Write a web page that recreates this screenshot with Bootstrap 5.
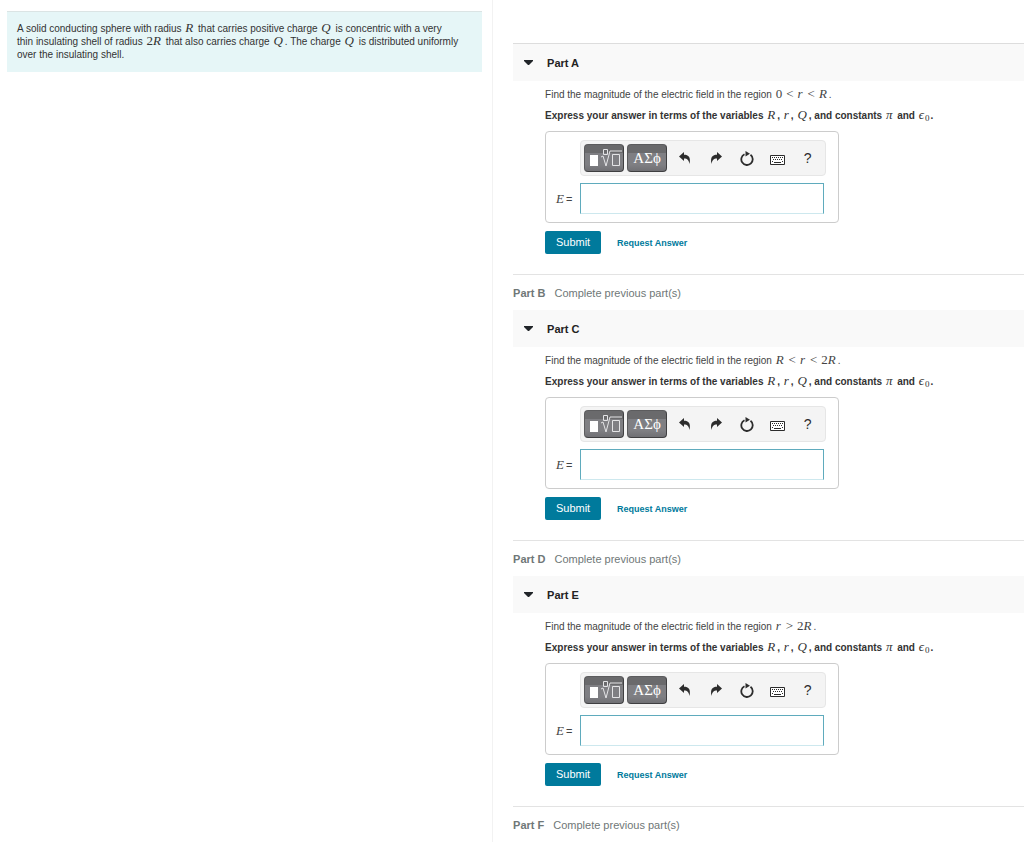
<!DOCTYPE html>
<html lang="en">
<head>
<meta charset="utf-8">
<meta name="viewport" content="width=device-width, initial-scale=1">
<title>Electric field of a sphere and shell</title>
<link href="https://cdn.jsdelivr.net/npm/bootstrap@5.3.0/dist/css/bootstrap.min.css" rel="stylesheet">
<style>
body{font-family:"Liberation Sans",Arial,sans-serif;font-size:11px;line-height:16px;color:#444;background:#fff}
.split{display:grid;grid-template-columns:37fr 40fr}
.intro{margin:11px 10px 0 7px;padding:10px 10px 11px;background:#e6f6f7;border-top:1px solid #dbe4e4;font-size:10px;line-height:13px;color:#333}
.parts{border-left:1px solid #f2f2f2;padding:43px 0 0 20px}
.m{display:inline-block;font-family:"Liberation Serif","Times New Roman",serif;font-size:13px;font-weight:400;line-height:12px;white-space:nowrap;padding:0 1px}
.m i{padding-right:1px}
.rel{padding:0 4px}
.m sub{font-size:9px;bottom:-2px}
.part-head{height:37px;background:#f9f9f9;color:#222;padding-left:11px}
.part-head.first{border-top:1px solid #ddd;height:38px}
.part-head h2{font-size:11px;font-weight:700;line-height:16px}
.part-head button{width:9px;height:16px;margin-right:14px;line-height:0}
.part-body{padding:6px 0 20px 32px}
.part-body p{font-size:10px}
.hint{margin-top:5px;color:#333}
.answer{width:294px;max-width:100%;margin-top:7px;border:1px solid #ccc;border-radius:4px;padding:8px 12px 8px 9px}
.tools{margin-left:25px;width:246px;height:36px;background:#f4f4f4;border:1px solid #e6e6e6;border-radius:4px;padding:0 2px 0 3px}
.tools button{flex:1;height:28px;color:#2c2c2c;line-height:0}
.tools .key{flex:none;width:40px;height:28px;margin-right:3px;border:1px solid #5c5c5e;border-right-color:#3f3f41;border-bottom-color:#3f3f41;border-radius:4px;background:linear-gradient(#6a6a6c 0 30%,#7f7f83 30% 75%,#707074);color:#fff;font:15px/24px "Liberation Serif",serif}
.tools .help{font-size:14px}
.field{margin-top:7px}
.field label{width:25px}
.field input{width:244px;height:31px;border:1px solid #5fabbd;border-bottom-color:#cde8ee;padding:0 6px;border-radius:0;font-size:13px}
.submit{width:56px;height:23px;background:#007a9c;color:#fff;border-radius:2px;font-size:11px;line-height:23px}
.request{font-size:9px;color:#007a9c;margin-left:16px}
.locked{border-top:1px solid #e3e3e3;padding:10px 0 9px;color:#6f7777}
.locked b{margin-right:9px}
</style>
</head>
<body>
<svg class="d-none" xmlns="http://www.w3.org/2000/svg">
<symbol id="caret" viewBox="0 0 9 5"><path d="M0 0h9v1L5 5H4L0 1z" fill="currentColor"/></symbol>
<symbol id="root" viewBox="0 0 38 26"><path d="M5 9h8v11H5z" fill="#fff"/><path d="M18.500 3.500h4v5h-4zM16 11l2-1 3 10 4-15h12M27.500 8.500h7v11h-7z" fill="none" stroke="#e4e4e6"/></symbol>
<symbol id="undo" viewBox="0 0 12 12"><path d="M0 4.500 5 0v2.700c4.500 0 7 2.500 5.500 9.300C10 8.500 8.500 6.500 5 6.500V9z" fill="currentColor"/></symbol>
<symbol id="redo" viewBox="0 0 12 12"><path d="M12 4.500 7 0v2.700C2.500 2.700 0 5.200 1.500 12 2 8.500 3.500 6.500 7 6.500V9z" fill="currentColor"/></symbol>
<symbol id="reset" viewBox="0 0 14 15"><path d="M4.500 3.200A5.700 5.700 0 1 0 10.500 3.800" fill="none" stroke="currentColor" stroke-width="1.800"/><path d="M5.500 0l4.500 2.800L5.500 5.500z" fill="currentColor"/></symbol>
<symbol id="keys" viewBox="0 0 15 10"><path d="M.5.5h14v9H.5z" fill="#fff" stroke="currentColor"/><path d="M2 2.500h11M3 4.500h10M2 6.500h1M12 6.500h1" fill="none" stroke="currentColor" stroke-dasharray="1 1"/><path d="M4 7.500h7" stroke="currentColor"/></symbol>
</svg>

<div class="split min-vh-100">
<aside>
<div class="intro">A solid conducting sphere with radius <span class="m"><i>R</i></span> that carries positive charge <span class="m"><i>Q</i></span> is concentric with a very<br>thin insulating shell of radius <span class="m">2<i>R</i></span> that also carries charge <span class="m"><i>Q</i></span>. The charge <span class="m"><i>Q</i></span> is distributed uniformly<br>over the insulating shell.</div>
</aside>

<main class="parts">
<section>
<div class="part-head first d-flex align-items-center"><button class="btn border-0 p-0" type="button" aria-label="Collapse Part A"><svg width="9" height="5"><use href="#caret"/></svg></button><h2 class="m-0">Part A</h2></div>
<div class="part-body">
<p class="m-0">Find the magnitude of the electric field in the region <span class="m">0<span class="rel">&lt;</span><i>r</i><span class="rel">&lt;</span><i>R</i></span>.</p>
<p class="hint fw-bold mb-0">Express your answer in terms of the variables <span class="m"><i>R</i></span>, <span class="m"><i>r</i></span>, <span class="m"><i>Q</i></span>, and constants <span class="m"><i>π</i></span> and <span class="m"><i>ϵ</i><sub>0</sub></span>.</p>
<div class="answer">
<div class="tools d-flex align-items-center">
<button class="btn key p-0" type="button" aria-label="Templates"><svg width="38" height="26"><use href="#root"/></svg></button>
<button class="btn key p-0" type="button">ΑΣϕ</button>
<button class="btn border-0 p-0" type="button" aria-label="Undo"><svg width="12" height="12"><use href="#undo"/></svg></button>
<button class="btn border-0 p-0" type="button" aria-label="Redo"><svg width="12" height="12"><use href="#redo"/></svg></button>
<button class="btn border-0 p-0" type="button" aria-label="Reset"><svg width="14" height="15"><use href="#reset"/></svg></button>
<button class="btn border-0 p-0" type="button" aria-label="Keyboard shortcuts"><svg class="mt-1" width="15" height="10"><use href="#keys"/></svg></button>
<button class="btn border-0 p-0 help" type="button">?</button>
</div>
<div class="field d-flex align-items-center"><label for="ansA"><span class="m"><i>E</i></span>=</label><input id="ansA" type="text"></div>
</div>
<div class="d-flex align-items-center mt-2"><button class="btn border-0 p-0 submit" type="submit">Submit</button><a class="request fw-bold text-decoration-none" href="#">Request Answer</a></div>
</div>
</section>
<div class="locked"><b>Part B</b>Complete previous part(s)</div>

<section>
<div class="part-head d-flex align-items-center"><button class="btn border-0 p-0" type="button" aria-label="Collapse Part C"><svg width="9" height="5"><use href="#caret"/></svg></button><h2 class="m-0">Part C</h2></div>
<div class="part-body">
<p class="m-0">Find the magnitude of the electric field in the region <span class="m"><i>R</i><span class="rel">&lt;</span><i>r</i><span class="rel">&lt;</span>2<i>R</i></span>.</p>
<p class="hint fw-bold mb-0">Express your answer in terms of the variables <span class="m"><i>R</i></span>, <span class="m"><i>r</i></span>, <span class="m"><i>Q</i></span>, and constants <span class="m"><i>π</i></span> and <span class="m"><i>ϵ</i><sub>0</sub></span>.</p>
<div class="answer">
<div class="tools d-flex align-items-center">
<button class="btn key p-0" type="button" aria-label="Templates"><svg width="38" height="26"><use href="#root"/></svg></button>
<button class="btn key p-0" type="button">ΑΣϕ</button>
<button class="btn border-0 p-0" type="button" aria-label="Undo"><svg width="12" height="12"><use href="#undo"/></svg></button>
<button class="btn border-0 p-0" type="button" aria-label="Redo"><svg width="12" height="12"><use href="#redo"/></svg></button>
<button class="btn border-0 p-0" type="button" aria-label="Reset"><svg width="14" height="15"><use href="#reset"/></svg></button>
<button class="btn border-0 p-0" type="button" aria-label="Keyboard shortcuts"><svg class="mt-1" width="15" height="10"><use href="#keys"/></svg></button>
<button class="btn border-0 p-0 help" type="button">?</button>
</div>
<div class="field d-flex align-items-center"><label for="ansC"><span class="m"><i>E</i></span>=</label><input id="ansC" type="text"></div>
</div>
<div class="d-flex align-items-center mt-2"><button class="btn border-0 p-0 submit" type="submit">Submit</button><a class="request fw-bold text-decoration-none" href="#">Request Answer</a></div>
</div>
</section>
<div class="locked"><b>Part D</b>Complete previous part(s)</div>

<section>
<div class="part-head d-flex align-items-center"><button class="btn border-0 p-0" type="button" aria-label="Collapse Part E"><svg width="9" height="5"><use href="#caret"/></svg></button><h2 class="m-0">Part E</h2></div>
<div class="part-body">
<p class="m-0">Find the magnitude of the electric field in the region <span class="m"><i>r</i><span class="rel">&gt;</span>2<i>R</i></span>.</p>
<p class="hint fw-bold mb-0">Express your answer in terms of the variables <span class="m"><i>R</i></span>, <span class="m"><i>r</i></span>, <span class="m"><i>Q</i></span>, and constants <span class="m"><i>π</i></span> and <span class="m"><i>ϵ</i><sub>0</sub></span>.</p>
<div class="answer">
<div class="tools d-flex align-items-center">
<button class="btn key p-0" type="button" aria-label="Templates"><svg width="38" height="26"><use href="#root"/></svg></button>
<button class="btn key p-0" type="button">ΑΣϕ</button>
<button class="btn border-0 p-0" type="button" aria-label="Undo"><svg width="12" height="12"><use href="#undo"/></svg></button>
<button class="btn border-0 p-0" type="button" aria-label="Redo"><svg width="12" height="12"><use href="#redo"/></svg></button>
<button class="btn border-0 p-0" type="button" aria-label="Reset"><svg width="14" height="15"><use href="#reset"/></svg></button>
<button class="btn border-0 p-0" type="button" aria-label="Keyboard shortcuts"><svg class="mt-1" width="15" height="10"><use href="#keys"/></svg></button>
<button class="btn border-0 p-0 help" type="button">?</button>
</div>
<div class="field d-flex align-items-center"><label for="ansE"><span class="m"><i>E</i></span>=</label><input id="ansE" type="text"></div>
</div>
<div class="d-flex align-items-center mt-2"><button class="btn border-0 p-0 submit" type="submit">Submit</button><a class="request fw-bold text-decoration-none" href="#">Request Answer</a></div>
</div>
</section>
<div class="locked pb-0"><b>Part F</b>Complete previous part(s)</div>
</main>
</div>
<script src="https://cdn.jsdelivr.net/npm/bootstrap@5.3.0/dist/js/bootstrap.bundle.min.js"></script>
</body>
</html>
